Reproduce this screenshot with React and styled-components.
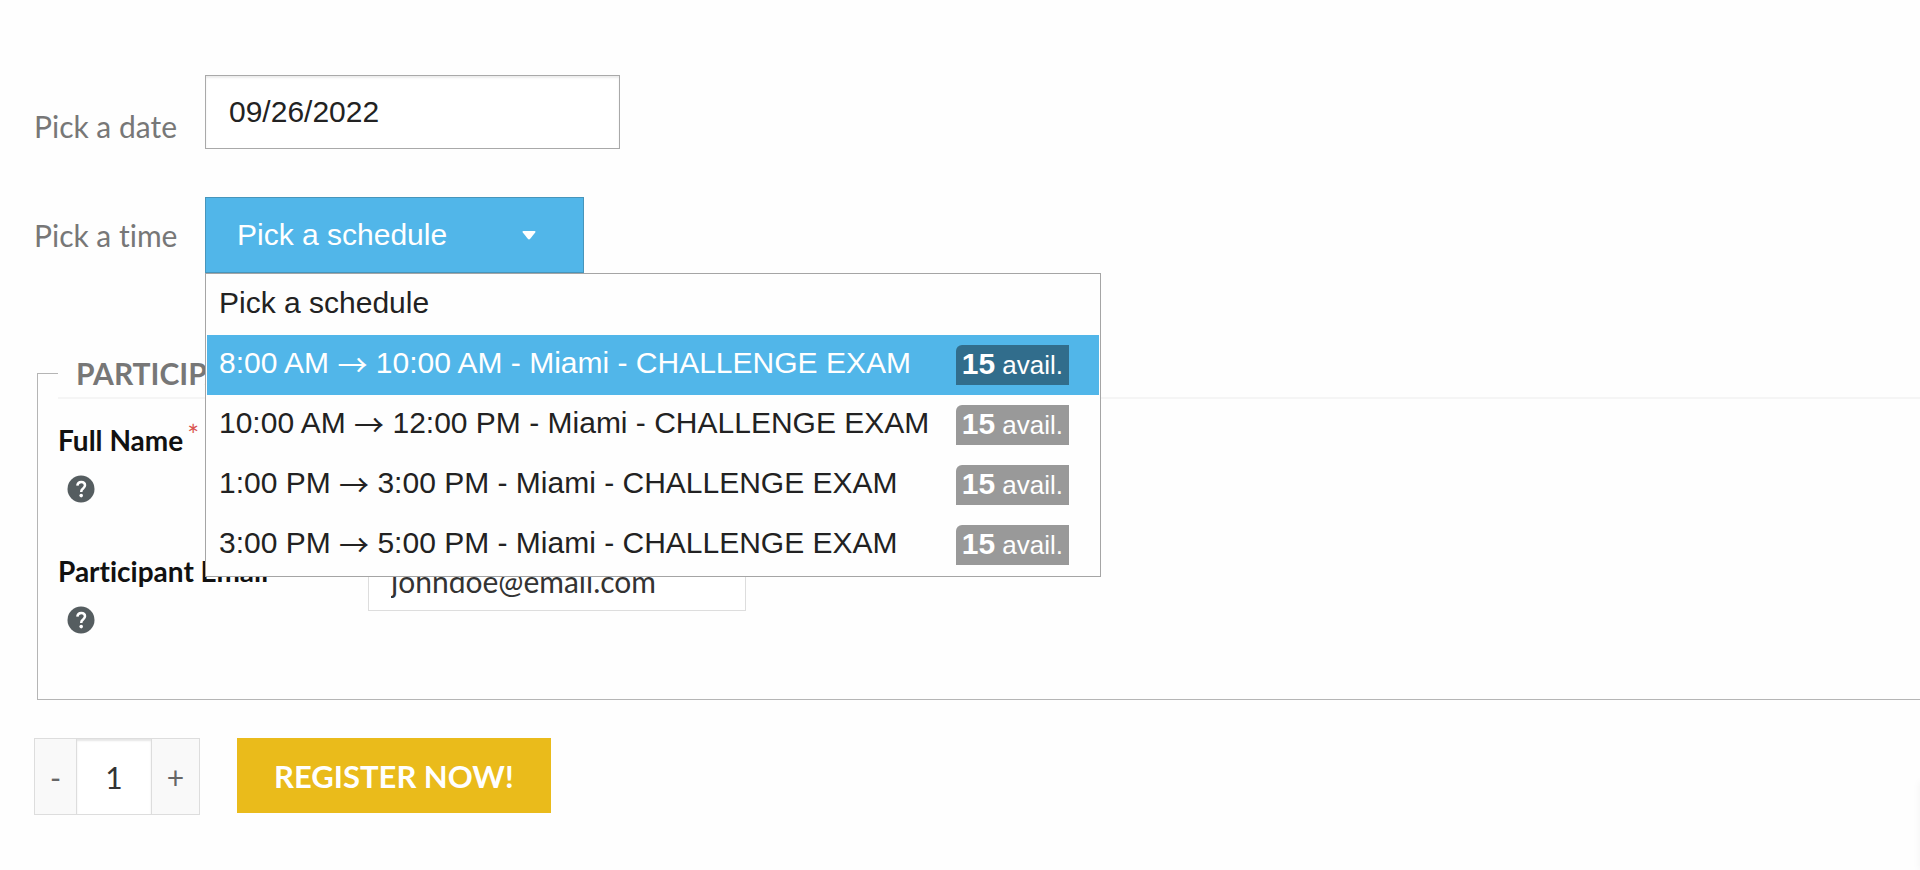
import { useState } from "react";
import styled, { createGlobalStyle } from "styled-components";

const schedules = [
  { id: 1, start: "8:00 AM", end: "10:00 AM", avail: 15 },
  { id: 2, start: "10:00 AM", end: "12:00 PM", avail: 15 },
  { id: 3, start: "1:00 PM", end: "3:00 PM", avail: 15 },
  { id: 4, start: "3:00 PM", end: "5:00 PM", avail: 15 },
];

const HelpIcon = () => (
  <HelpSvg viewBox="0 0 28 28" aria-hidden="true">
    <circle cx="14" cy="14" r="13.5" fill="#555d60" />
    <path
      d="M10.3 10.6C10.6 8.3 12.1 7 14.2 7c2.2 0 3.8 1.3 3.8 3.3 0 1.5-.8 2.3-1.9 3.2-1.2.9-1.8 1.5-1.8 2.8v.6"
      fill="none"
      stroke="#fff"
      strokeWidth="2.5"
    />
    <circle cx="14.2" cy="20.6" r="1.8" fill="#fff" />
  </HelpSvg>
);

const App = () => {
  const [date, setDate] = useState("09/26/2022");
  const [isOpen, setIsOpen] = useState(true);
  const [active, setActive] = useState(1);
  const [fullName, setFullName] = useState("");
  const [email, setEmail] = useState("johndoe@email.com");
  const [qty, setQty] = useState(1);

  const handleOnSubmit = (e) => {
    e.preventDefault();
  };

  return (
    <>
      <GlobalStyle />
      <Form onSubmit={handleOnSubmit}>
        <PickerRow>
          <PickerLabel htmlFor="date" $low>
            Pick a date
          </PickerLabel>
          <DateInput
            id="date"
            type="text"
            autoComplete="off"
            value={date}
            onChange={(e) => setDate(e.target.value)}
          />
        </PickerRow>
        <PickerRow>
          <PickerLabel htmlFor="schedule">Pick a time</PickerLabel>
          <DropDownWrapper>
            <DropDownButton
              id="schedule"
              type="button"
              aria-haspopup="listbox"
              aria-expanded={isOpen}
              onClick={() => setIsOpen(!isOpen)}
            >
              Pick a schedule
              <Caret viewBox="0 0 14 9" aria-hidden="true">
                <path d="M1.5 0h11q1.6.3.7 1.6L8.2 7.8Q7 9 5.8 7.8L.8 1.6Q-.1.3 1.5 0z" />
              </Caret>
            </DropDownButton>
            {isOpen && (
              <Menu role="listbox" aria-label="Pick a time">
                <Option role="option" onMouseEnter={() => setActive(0)}>
                  Pick a schedule
                </Option>
                {schedules.map((item) => (
                  <Option
                    key={item.id}
                    role="option"
                    aria-selected={active === item.id}
                    $active={active === item.id}
                    onMouseEnter={() => setActive(item.id)}
                  >
                    <span>
                      {item.start} <Arrow>→</Arrow> {item.end} - Miami -
                      CHALLENGE EXAM
                    </span>
                    <Badge $active={active === item.id}>
                      <b>{item.avail}</b> avail.
                    </Badge>
                  </Option>
                ))}
              </Menu>
            )}
          </DropDownWrapper>
        </PickerRow>
        <Participant>
          <Legend>PARTICIPANT</Legend>
          <Field>
            <FieldLabel htmlFor="fullName">
              Full Name<Required>*</Required>
              <HelpIcon />
            </FieldLabel>
            <FieldInput
              id="fullName"
              type="text"
              value={fullName}
              onChange={(e) => setFullName(e.target.value)}
            />
          </Field>
          <Field>
            <FieldLabel htmlFor="email">
              Participant Email
              <HelpIcon />
            </FieldLabel>
            <FieldInput
              id="email"
              type="email"
              value={email}
              onChange={(e) => setEmail(e.target.value)}
            />
          </Field>
        </Participant>
        <Actions>
          <Quantity>
            <QtyButton
              type="button"
              $width={41}
              onClick={() => setQty(Math.max(1, qty - 1))}
            >
              -
            </QtyButton>
            <QtyInput
              type="text"
              inputMode="numeric"
              aria-label="Quantity"
              value={qty}
              onChange={(e) => setQty(Number(e.target.value) || 1)}
            />
            <QtyButton type="button" $width={47} onClick={() => setQty(qty + 1)}>
              +
            </QtyButton>
          </Quantity>
          <RegisterButton type="submit">REGISTER NOW!</RegisterButton>
        </Actions>
      </Form>
      <SideWidget />
    </>
  );
};
export default App;

const GlobalStyle = createGlobalStyle`
  * {
    box-sizing: border-box;
  }
  body {
    margin: 0;
    background: #fefefe;
    color: #222;
    font-family: Lato, "Liberation Sans", sans-serif;
    font-size: 30px;
    font-variant-ligatures: none;
    overflow-x: hidden;
  }
  button,
  input {
    font: inherit;
    margin: 0;
    border-radius: 0;
  }
`;
const Form = styled.form`
  padding: 75px 0 55px 34px;
`;
const PickerRow = styled.div`
  display: grid;
  grid-template-columns: 171px 1fr;
  align-items: center;
  margin-bottom: 48px;
`;
const PickerLabel = styled.label`
  padding-top: ${(props) => (props.$low ? 28 : 0)}px;
  color: #777;
  line-height: 36px;
`;
const DateInput = styled.input`
  width: 415px;
  height: 74px;
  padding: 0 23px;
  border: 1px solid #a9a9a9;
  background: #fff;
  box-shadow: inset 0 2px 2px rgba(0, 0, 0, 0.08);
  color: #222;
  font-family: "Liberation Sans", Arial, sans-serif;
`;
const DropDownWrapper = styled.div`
  position: relative;
`;
const DropDownButton = styled.button`
  display: flex;
  align-items: center;
  justify-content: space-between;
  width: 379px;
  height: 76px;
  padding: 0 47px 0 31px;
  border: 1px solid #4795bb;
  background: #51b6e9;
  color: #fff;
  font-family: "Liberation Sans", Arial, sans-serif;
  cursor: pointer;
`;
const Caret = styled.svg`
  width: 14px;
  height: 9px;
  fill: #fff;
`;
const Menu = styled.ul`
  position: absolute;
  top: 100%;
  left: 0;
  z-index: 10;
  width: 896px;
  margin: 0;
  padding: 1px;
  border: 1px solid #a5a5a5;
  background: #fefefe;
  list-style: none;
  font-family: "Liberation Sans", Arial, sans-serif;
`;
const Option = styled.li`
  display: flex;
  align-items: center;
  justify-content: space-between;
  height: 60px;
  padding: 0 30px 4px 12px;
  background: ${(props) => (props.$active ? "#51b6e9" : "transparent")};
  color: ${(props) => (props.$active ? "#fff" : "#222")};
  line-height: 36px;
  white-space: nowrap;
  cursor: pointer;
`;
const Arrow = styled.span`
  font-family: "Noto Sans CJK SC", sans-serif;
  line-height: 0;
  vertical-align: -3px;
`;
const Badge = styled.span`
  height: 40px;
  margin-top: 4px;
  padding: 0 6px;
  border-radius: 6px 0 0 0;
  background: ${(props) => (props.$active ? "#316d8c" : "#999")};
  color: #fff;
  font-size: 26px;
  line-height: 38px;

  b {
    font-size: 30px;
  }
`;
const Participant = styled.fieldset`
  min-width: 0;
  margin: 75px -40px 38px 3px;
  padding: 0 20px 38px;
  border: 1px solid #b5b5b5;
`;
const Legend = styled.legend`
  width: 100%;
  height: 51px;
  padding: 0 18px;
  border-bottom: 2px solid #f5f5f5;
  color: #777;
  font-weight: 700;
  line-height: 51px;
`;
const Field = styled.div`
  display: grid;
  grid-template-columns: 310px 378px;
  align-items: start;
  min-height: 131px;
  padding-top: 20px;
`;
const FieldLabel = styled.label`
  color: #111;
  font-size: 28px;
  font-weight: 700;
  line-height: 42px;
`;
const Required = styled.sup`
  margin-left: 4px;
  color: #d9534f;
  font-size: 28px;
  font-weight: 400;
  line-height: 0;
  vertical-align: 5px;
`;
const HelpSvg = styled.svg`
  display: block;
  width: 28px;
  height: 28px;
  margin: 14px 0 0 9px;
`;
const FieldInput = styled.input`
  height: 61px;
  padding: 0 22px;
  border: 1px solid #ddd;
  background: #fff;
  color: #333;
`;
const Actions = styled.div`
  display: flex;
  gap: 37px;
  align-items: flex-start;
`;
const Quantity = styled.div`
  display: flex;
  height: 77px;
  border: 1px solid #ddd;
`;
const QtyButton = styled.button`
  width: ${(props) => props.$width}px;
  padding: 0;
  border: 0;
  background: #f9f9f9;
  color: #666;
  font-size: 30px;
  cursor: pointer;
`;
const QtyInput = styled.input`
  width: 76px;
  padding: 0;
  border: solid #ddd;
  border-width: 0 1px;
  background: #fff;
  box-shadow: inset 0 2px 2px rgba(0, 0, 0, 0.1);
  color: #333;
  text-align: center;
`;
const RegisterButton = styled.button`
  height: 75px;
  padding: 0 37px;
  border: 0;
  background: #eabb1b;
  color: #fff;
  font-size: 31px;
  font-weight: 700;
  cursor: pointer;
`;
const SideWidget = styled.div`
  position: fixed;
  right: -20px;
  bottom: 0;
  width: 20px;
  height: 88px;
  box-shadow: 0 0 8px rgba(0, 0, 0, 0.05);
`;
